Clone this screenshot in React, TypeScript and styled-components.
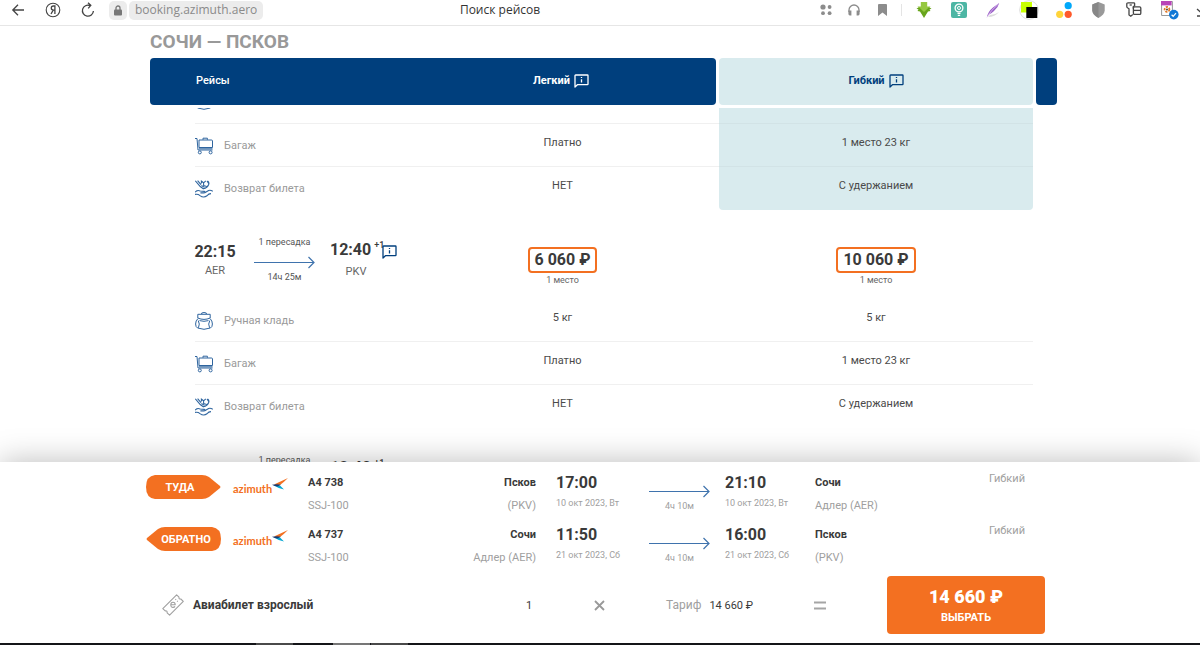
import React from "react";
import styled, { createGlobalStyle, css } from "styled-components";

const navy = "#003f7d";
const orange = "#f37021";
const teal = "#d9ebee";
const ink = "#3a3a3a";
const muted = "#a0a0a0";
const rule = "rgba(0, 0, 0, 0.06)";
const roboto = `Roboto, "Liberation Sans", sans-serif`;
const chromeFont = `"Open Sans", "Noto Sans", sans-serif`;

const GlobalStyle = createGlobalStyle`
  * { box-sizing: border-box; }
  body { margin: 0; background: #fff; color: ${ink}; font-family: ${roboto}; }
  svg { display: block; flex: none; }
  button { font-family: inherit; cursor: pointer; }
`;

const Screen = styled.div`
  display: flex;
  flex-direction: column;
  height: 100vh;
  overflow: hidden;
`;

/* Browser bar */

const BrowserBar = styled.header`
  display: grid;
  grid-template-columns: minmax(0, 46fr) auto minmax(0, 66fr);
  flex: none;
  height: 26px;
  border-bottom: 1px solid #e6e6e6;
  font-family: ${chromeFont};
  overflow: hidden;
`;

const BarGroup = styled.div<{ $end?: boolean }>`
  display: flex;
  align-items: center;
  height: 20px;
  justify-content: ${(p) => (p.$end ? "flex-end" : "flex-start")};
`;

const NavButton = styled.button`
  display: flex;
  justify-content: center;
  align-items: center;
  flex: none;
  width: 35px;
  height: 20px;
  padding: 0;
  border: 0;
  background: none;
`;

const LockChip = styled.button`
  display: flex;
  justify-content: center;
  align-items: center;
  width: 18px;
  height: 19px;
  margin: 0 2px 0 4px;
  padding: 0;
  border: 0;
  border-radius: 5px;
  background: #ececec;
`;

const Address = styled.input`
  width: 134px;
  height: 19px;
  padding: 0 6px 1px;
  border: 0;
  border-radius: 5px;
  background: #ececec;
  color: #8a8a8a;
  font: 12px/18px ${chromeFont};
`;

const PageTitle = styled.p`
  margin: 0;
  color: #333;
  font-size: 12px;
  line-height: 20px;
`;

const ToolButton = styled(NavButton)<{ $small?: boolean }>`
  width: ${(p) => (p.$small ? 28 : 35)}px;
`;

const Separator = styled.i`
  width: 1px;
  height: 12px;
  margin: 0 4px 0 5px;
  background: #e4e4e4;
`;

/* Flight results */

const Results = styled.main`
  display: flex;
  flex-direction: column;
  flex: 1;
  min-height: 0;
  padding: 4px 143px 0 150px;
  overflow: hidden;
`;

const RouteTitle = styled.h1`
  margin: 0;
  color: #999;
  font-size: 19px;
  font-weight: 700;
  line-height: 24px;
`;

const FareTable = styled.table`
  display: flex;
  flex-direction: column;
  flex: 1;
  min-height: 0;
  margin-top: 4px;
`;

const Row = styled.tr<{ $height?: number }>`
  display: grid;
  grid-template-columns: minmax(0, 256fr) minmax(0, 313fr) minmax(0, 314fr) 24px;
  grid-template-rows: minmax(0, 1fr);
  height: ${(p) => p.$height ?? 43}px;
`;

const FareHead = styled.thead`
  display: block;
  flex: none;
`;

const HeadCell = styled.th<{ $kind: "title" | "light" | "flex" | "stub" }>`
  display: flex;
  align-items: center;
  justify-content: center;
  gap: 4px;
  padding: 0 0 2px;
  background: ${navy};
  color: #fff;
  font-size: 11px;
  font-weight: 700;
  ${(p) =>
    p.$kind === "title" &&
    css`
      justify-content: flex-start;
      padding-left: 46px;
      border-radius: 4px 0 0 4px;
      font-weight: 500;
    `}
  ${(p) =>
    p.$kind === "light" &&
    css`
      margin-right: 3px;
      border-radius: 0 4px 4px 0;
    `}
  ${(p) =>
    p.$kind === "flex" &&
    css`
      border-radius: 4px;
      background: ${teal};
      color: ${navy};
    `}
  ${(p) =>
    p.$kind === "stub" &&
    css`
      margin-left: 3px;
      border-radius: 4px;
    `}
`;

const BodyRows = styled.tbody`
  display: block;
  flex: 1;
  min-height: 0;
  margin-top: 3px;
  overflow: hidden;
`;

const RowLabel = styled.th<{ $line?: boolean }>`
  display: flex;
  align-items: center;
  gap: 11px;
  margin-left: 45px;
  padding: 1px 0 0;
  border-bottom: 1px solid ${(p) => (p.$line ? rule : "transparent")};
  color: #9a9a9a;
  font-size: 11px;
  font-weight: 400;
  text-align: left;
`;

const TailLabel = styled(RowLabel)`
  align-items: flex-end;
  padding: 0 0 13px;
`;

const Value = styled.td<{ $line?: boolean; $selected?: boolean; $last?: boolean }>`
  padding: 11px 0 0;
  border-bottom: 1px solid ${(p) => (!p.$line ? "transparent" : p.$selected ? "rgba(0, 0, 0, 0.03)" : rule)};
  border-radius: ${(p) => (p.$last ? "0 0 4px 4px" : 0)};
  background: ${(p) => (p.$selected ? teal : "none")};
  color: #4a4a4a;
  font-size: 11px;
  line-height: 16px;
  text-align: center;
`;

const FlightCell = styled.th`
  display: flex;
  align-items: flex-start;
  margin-left: 44px;
  padding: 24px 0 0;
  font-weight: 400;
`;

const Stop = styled.div<{ $arrival?: boolean }>`
  flex: none;
  width: ${(p) => (p.$arrival ? 52 : 42)}px;
  padding-top: ${(p) => (p.$arrival ? 6 : 8)}px;
  text-align: center;
`;

const TimeLine = styled.div`
  display: flex;
  gap: 3px;
`;

const Time = styled.time`
  color: ${ink};
  font-size: 16px;
  font-weight: 700;
  line-height: 20px;
`;

const DayShift = styled.sup`
  font-size: 9px;
  font-weight: 500;
  line-height: 10px;
`;

const Airport = styled.div<{ $low?: boolean }>`
  padding-top: ${(p) => (p.$low ? 4 : 1)}px;
  color: #666;
  font-size: 11px;
  line-height: 16px;
`;

const Leg = styled.div<{ $muted?: boolean }>`
  display: flex;
  flex-direction: column;
  align-items: center;
  flex: none;
  width: 61px;
  color: ${(p) => (p.$muted ? muted : "#555")};
  font-size: 9px;
  line-height: 16px;
  white-space: nowrap;
`;

const FlightLeg = styled(Leg)`
  margin: 0 15px 0 18px;
  svg {
    margin: 6px 0 0;
  }
`;

const InfoSlot = styled.span`
  display: block;
  padding-top: 11px;
  color: ${navy};
`;

const PriceCell = styled.td`
  display: flex;
  flex-direction: column;
  align-items: center;
  padding: 37px 0 0;
  color: #666;
  font-size: 9px;
  line-height: 14px;
`;

const PriceButton = styled.button`
  height: 26px;
  padding: 0 5px;
  border: 2px solid ${orange};
  border-radius: 4px;
  background: #fff;
  color: ${ink};
  font-size: 16px;
  font-weight: 700;
  line-height: 22px;
`;

/* Booking summary */

const Summary = styled.section`
  position: relative;
  flex: none;
  padding: 10px 155px 9px 146px;
  background: #fff;
  box-shadow: 0 0 30px rgba(0, 0, 0, 0.27);
`;

const Segment = styled.article`
  display: grid;
  grid-template-columns: 87px 75px minmax(0, 100fr) minmax(0, 128fr) 113px 76px 90px minmax(0, 154fr) 76px;
  height: 52px;
`;

const Tag = styled.span<{ $back?: boolean }>`
  position: relative;
  display: flex;
  align-items: center;
  justify-content: center;
  width: 75px;
  height: 24px;
  margin-top: 3px;
  padding: ${(p) => (p.$back ? "0 0 0 5px" : "0 7px 0 0")};
  color: #fff;
  font-size: 11px;
  font-weight: 700;
  svg {
    position: absolute;
    inset: 0;
    transform: ${(p) => (p.$back ? "scaleX(-1)" : "none")};
  }
  span {
    position: relative;
  }
`;

const Brand = styled.span`
  display: flex;
  align-items: flex-start;
  padding-top: 5px;
  color: ${orange};
  font: 700 11px/24px Lato, sans-serif;
`;

const Pair = styled.div<{ $right?: boolean }>`
  color: ${muted};
  font-size: 11px;
  line-height: 16px;
  text-align: ${(p) => (p.$right ? "right" : "left")};
  strong {
    display: block;
    padding: 3px 0 7px;
    color: ${ink};
    font-weight: 700;
  }
`;

const Moment = styled.div<{ $indent?: boolean }>`
  padding: 1px 0 0 ${(p) => (p.$indent ? 20 : 0)}px;
  color: ${muted};
  font-size: 9px;
  line-height: 16px;
  white-space: nowrap;
  ${Time} {
    display: block;
    padding-bottom: 2px;
  }
`;

const SummaryLeg = styled(Leg)`
  padding-top: 13px;
`;

const FareClass = styled.span`
  padding-top: 1px;
  color: ${muted};
  font-size: 11px;
  line-height: 12px;
  text-align: center;
`;

const TotalRow = styled.div`
  display: grid;
  grid-template-columns: minmax(0, 373fr) minmax(0, 75fr) minmax(0, 57fr) minmax(0, 163fr) minmax(0, 73fr) 158px;
  align-items: center;
  height: 58px;
  font-size: 12px;
`;

const Passenger = styled.strong`
  display: flex;
  align-items: center;
  gap: 9px;
  padding-left: 16px;
`;

const Quantity = styled.span`
  padding-left: 7px;
  font-size: 11px;
`;

const Tariff = styled.span`
  display: flex;
  align-items: baseline;
  gap: 8px;
  padding-left: 15px;
  color: ${muted};
  b {
    color: ${ink};
    font-size: 11px;
    font-weight: 400;
  }
`;

const ChooseButton = styled.button`
  display: flex;
  flex-direction: column;
  align-items: center;
  justify-content: center;
  height: 58px;
  padding: 2px 0 0;
  border: 0;
  border-radius: 4px;
  background: ${orange};
  color: #fff;
  font-size: 11px;
  font-weight: 700;
  line-height: 18px;
  b {
    font-size: 18px;
    line-height: 24px;
  }
`;

const TaskStrip = styled.footer`
  display: flex;
  flex: none;
  gap: 1px;
  height: 2px;
  padding-left: 256px;
  background: #17181c;
`;

const Task = styled.i<{ $tone: string; $gap?: boolean }>`
  width: 37px;
  margin-right: ${(p) => (p.$gap ? 39 : 0)}px;
  background: ${(p) => p.$tone};
`;

/* Drawings */

const InfoIcon = () => (
  <svg width="15" height="14" viewBox="0 0 15 14" fill="none" stroke="currentColor" strokeWidth="1.3">
    <path d="M1 13V1.6Q1 1 1.6 1H13.4Q14 1 14 1.6V10Q14 10.7 13.4 10.7H3.4Z" strokeLinejoin="round" />
    <path d="M7.5 5.2V8.4M7.5 3V4.1" />
  </svg>
);

const ArrowIcon = () => (
  <svg width="61" height="13" viewBox="0 0 61 13" fill="none" stroke="#3f73ad" strokeWidth="1.2">
    <path d="M0 6.5H60M54.5 1L60 6.5L54.5 12" />
  </svg>
);

const BackpackIcon = () => (
  <svg width="18" height="18" viewBox="0 0 18 18" fill="none" stroke="#2f659f" strokeWidth="1">
    <path d="M6.7 2V1Q9 0 11.3 1V2M2.8 2.3H15.2V6Q12 7.4 9 7.4T2.8 6ZM3 6.5Q.6 8.5.6 12Q.6 15 2.6 16Q9 18.6 15.4 16Q17.4 15 17.4 12Q17.4 8.5 15 6.5M3.4 15.8Q5.3 12 3.2 8.5M14.6 15.8Q12.7 12 14.8 8.5M4.5 8.6Q9 10 13.5 8.6" />
  </svg>
);

const CartIcon = () => (
  <svg width="18" height="18" viewBox="0 0 18 18" fill="none" stroke="#2f659f" strokeWidth="1">
    <path d="M0 1.5H2L3 13H17.5M4 3H16.5Q17.5 3 17.5 4V10.5H4ZM8 2.8V1.2H12.4V2.8M4 11.8H17.5" />
    <circle cx="4.8" cy="15.4" r="1.5" />
    <circle cx="15.6" cy="15.4" r="1.5" />
  </svg>
);

const RefundIcon = () => (
  <svg width="18" height="18" viewBox="0 0 18 18" fill="none" stroke="#2f659f" strokeWidth="1.1">
    <path d="M.3.8L5.5 6.8M2.6.6L6 4.6M5.5 6.8L8.4 8.8Q12.4 8 13.6 4.8Q14.6 2.6 12.6 1M6.4 3.6V1.2L8.6 2.8L10.8.8M8.6 2.8V5.4L11.6 6.4M6.4 5.6L9.4 7.2M12 1L13.8 3.6" />
    <path d="M0 12.2Q2.4 9.6 5.2 11L9.4 11.4Q10.6 12.4 9 12.9H5.4M9.8 12.8L13.6 10.5Q15.4 9.6 17.8 11.3M0 14.4Q3 13.8 5 15.6Q8.6 18.4 12 15.8Q13.6 13.6 16 13.6" />
  </svg>
);

const TicketIcon = () => (
  <svg width="22" height="22" viewBox="0 0 22 22" fill="none" stroke="#a0a0a0" strokeWidth="1.1" strokeLinejoin="round">
    <path d="M14.6.8L17 3.2Q16.6 5.2 18.8 5L21.3 7.3L7.6 21.2L5.1 18.8Q5.4 16.6 3.2 16.9L.8 14.6Z" />
    <path d="M8.8 10.8H13.2Q13.2 8.2 11 8.2T8.8 10.8T11 13.4Q12.4 13.4 13 12.4" />
    <path d="M13.4 5.2L16.6 8.4" strokeDasharray="1 1.4" />
  </svg>
);

const TagShape = () => (
  <svg width="75" height="24" viewBox="0 0 75 24" fill={orange}>
    <path d="M9 0H56Q60 0 63 2L74 11Q75 12 74 13L63 22Q60 24 56 24H9Q0 23 0 12T9 0Z" />
  </svg>
);

const WingIcon = () => (
  <svg width="17" height="14" viewBox="0 0 17 14">
    <path d="M2 7.4L16 1Q12 5 8 8L5 8.4Z" fill={orange} />
    <path d="M3 9L8 8.6L12 12.4Q6.6 11.6 3 9Z" fill="#00a5d3" />
    <path d="M0 7.8Q5 6.8 9 7.8L5.6 9.6Q2.4 9.4 0 7.8Z" fill="#123c78" />
  </svg>
);

const CrossIcon = () => (
  <svg width="11" height="11" viewBox="0 0 11 11" stroke="#999" strokeWidth="1.8">
    <path d="M1 1L10 10M10 1L1 10" />
  </svg>
);

const EqualsIcon = () => (
  <svg width="12" height="9" viewBox="0 0 12 9" stroke="#a5a5a5" strokeWidth="2">
    <path d="M0 1.5H12M0 7.5H12" />
  </svg>
);

const line = { fill: "none", stroke: "#444", strokeWidth: 1.3 };

const BackIcon = () => (
  <svg width="14" height="14" viewBox="0 0 14 14" {...line}>
    <path d="M13 7H2M7 1.8L1.8 7L7 12.2" />
  </svg>
);

const YandexIcon = () => (
  <svg width="16" height="16" viewBox="0 0 16 16" {...line}>
    <circle cx="8" cy="8" r="6.8" strokeWidth="1.1" />
    <path d="M9.9 12V4H8.4Q6.3 4 6.3 6T8.4 8.2H9.9M8.2 8.2L6 12" />
  </svg>
);

const ReloadIcon = () => (
  <svg width="14" height="16" viewBox="0 0 14 16" {...line}>
    <path d="M12.4 9A5.5 5.5 0 1 1 9 3.6M7 .8L9.8 3.4L7.2 6.4" />
  </svg>
);

const LockIcon = () => (
  <svg width="8" height="11" viewBox="0 0 8 11">
    <path d="M2 5V3A2 2 0 0 1 6 3V5" fill="none" stroke="#777" strokeWidth="1.3" />
    <rect y="4.4" width="8" height="6" rx="1" fill="#777" />
  </svg>
);

const CollectionIcon = () => (
  <svg width="12" height="12" viewBox="0 0 12 12" fill="#8c8c8c">
    <circle cx="3" cy="3" r="2.6" />
    <circle cx="9.6" cy="3" r="1.9" />
    <circle cx="3" cy="9.2" r="1.9" />
    <circle cx="9.6" cy="9.2" r="1.9" />
  </svg>
);

const HeadphonesIcon = () => (
  <svg width="12" height="12" viewBox="0 0 12 12">
    <path d="M1 8V6A5 5 0 0 1 11 6V8" fill="none" stroke="#8c8c8c" strokeWidth="1.3" />
    <path d="M.4 6.6H3.4V11.4H1.8Q.4 11.4.4 9.8ZM11.6 6.6H8.6V11.4H10.2Q11.6 11.4 11.6 9.8Z" fill="#8c8c8c" />
  </svg>
);

const BookmarkIcon = () => (
  <svg width="9" height="12" viewBox="0 0 9 12" fill="#8c8c8c">
    <path d="M0 1Q0 0 1 0H8Q9 0 9 1V12L4.5 8.4L0 12Z" />
  </svg>
);

const DownloadIcon = () => (
  <svg width="16" height="16" viewBox="0 0 16 16">
    <path d="M4.8 0H11.2V4.5H14.5L8 11L1.5 4.5H4.8Z" fill="#96c840" />
    <path d="M.5 6.5L3 5.2L8 10L13 5.2L15.5 6.5L13.5 7.4L14.5 9L12 9.4L8 16L4 9.4L1.5 9L2.5 7.4Z" fill="#68a51c" />
  </svg>
);

const LocatorIcon = () => (
  <svg width="16" height="16" viewBox="0 0 16 16" fill="none">
    <rect width="16" height="16" rx="2" fill="#4db6a4" />
    <circle cx="8" cy="6" r="3.9" stroke="#fff" strokeWidth="1.3" />
    <circle cx="8" cy="6" r="1.5" stroke="#fff" />
    <path d="M6.5 11.3H9.5M6.8 13.4H9.2" stroke="#fff" strokeWidth="1.2" />
  </svg>
);

const FeatherIcon = () => (
  <svg width="15" height="16" viewBox="0 0 15 16">
    <path d="M2 15Q9 15 13 10Q9 13 4 13Z" fill="#ddd" />
    <path d="M.8 15.5Q2 9.5 7 5.5L13.2 1Q12.4 5 8 9Q5.6 11.4 3 12.4Z" fill="#9a5fc7" />
    <path d="M1 15.3Q5 8 12 2.4" stroke="#e8d5f5" strokeWidth=".7" fill="none" />
  </svg>
);

const SquaresIcon = () => (
  <svg width="20" height="20" viewBox="0 0 20 20">
    <circle cx="10" cy="10" r="9.3" fill="#fff" stroke="#ddd" />
    <rect x="2" y="2" width="11" height="10.5" fill="#c8ff00" />
    <rect x="7.3" y="7" width="11" height="11" fill="#000" />
  </svg>
);

const DotsIcon = () => (
  <svg width="16" height="16" viewBox="0 0 16 16">
    <circle cx="12.2" cy="3.7" r="3.6" fill="#00a8fa" />
    <circle cx="3.7" cy="12.3" r="3.6" fill="#ffd43a" />
    <circle cx="12.2" cy="12.3" r="3.6" fill="#ff5a2b" />
  </svg>
);

const ShieldIcon = () => (
  <svg width="13" height="16" viewBox="0 0 13 16">
    <path d="M6.5 0L12.7 2.6V8.5Q12.5 12.5 6.5 16Q.5 12.5.3 8.5V2.6Z" fill="#999" />
    <path d="M6.5 0V16Q.5 12.5.3 8.5V2.6Z" fill="#878787" />
  </svg>
);

const KeyIcon = () => (
  <svg width="16" height="16" viewBox="0 0 16 16" {...line}>
    <path d="M7.2 6.5V4.8L8.6 3.7V1.6Q8.6.8 7.8.8H2Q.8.8.8 2V4.6Q.8 5.6 1.8 6L3 6.8V13L4.8 14.2L6.8 12.6" />
    <path d="M3.6 3H5.8" />
    <rect x="7.4" y="4.8" width="7.4" height="7.6" rx="1.2" />
    <path d="M7.4 8.4H14.8" />
  </svg>
);

const FileIcon = () => (
  <svg width="20" height="20" viewBox="0 0 20 20">
    <path d="M2.6 1.5H13.4V15.5H2.6Z" fill="#fff" stroke="#999" />
    <rect x="2" y="1" width="10.6" height="4.4" fill="#b844b8" />
    <circle cx="8" cy="9.4" r="2.4" fill="none" stroke="#e27a28" strokeWidth="1.8" strokeDasharray="2 1" />
    <circle cx="8" cy="9.4" r="1" fill="#444" />
    <circle cx="14.8" cy="14.6" r="4.8" fill="#1179d6" />
    <path d="M12.6 14.8L14.2 16.3L17 13.2" fill="none" stroke="#fff" strokeWidth="1.2" />
  </svg>
);

const OverflowIcon = () => (
  <svg width="14" height="14" viewBox="0 0 14 14" {...line}>
    <path d="M11 6L15 9.5M11 13H14" />
  </svg>
);

/* Data */

const tools = [
  ["Загрузки", DownloadIcon],
  ["Геолокация", LocatorIcon],
  ["Перо", FeatherIcon],
  ["Цвета", SquaresIcon],
  ["Сервисы", DotsIcon],
  ["Защита", ShieldIcon],
  ["Пароли", KeyIcon],
  ["Файлы", FileIcon],
] as const;

const handLuggage = { name: "Ручная кладь", Icon: BackpackIcon, light: "5 кг", flex: "5 кг" };
const baggage = { name: "Багаж", Icon: CartIcon, light: "Платно", flex: "1 место 23 кг" };
const refund = { name: "Возврат билета", Icon: RefundIcon, light: "НЕТ", flex: "С удержанием" };

type Service = typeof baggage;

const segments = [
  {
    tag: "ТУДА", back: false, number: "A4 738", date: "10 окт 2023, Вт",
    from: ["Псков", "(PKV)"], to: ["Сочи", "Адлер (AER)"], depart: "17:00", arrive: "21:10",
  },
  {
    tag: "ОБРАТНО", back: true, number: "A4 737", date: "21 окт 2023, Сб",
    from: ["Сочи", "Адлер (AER)"], to: ["Псков", "(PKV)"], depart: "11:50", arrive: "16:00",
  },
];

const ServiceRows = ({ items, selected }: { items: Service[]; selected?: boolean }) => (
  <>
    {items.map(({ name, Icon, light, flex }, i) => {
      const divided = i < items.length - 1;
      return (
        <Row key={name}>
          <RowLabel scope="row" $line={divided}>
            <Icon />
            {name}
          </RowLabel>
          <Value $line={divided}>{light}</Value>
          <Value $line={divided} $selected={selected} $last={!divided}>
            {flex}
          </Value>
        </Row>
      );
    })}
  </>
);

/* The end of a row that has scrolled under the table head. */
const TailRow = () => (
  <Row $height={16}>
    <TailLabel scope="row" $line aria-label={handLuggage.name}>
      <BackpackIcon />
    </TailLabel>
    <Value $line />
    <Value $line $selected />
  </Row>
);

const FlightRow = ({ prices }: { prices: string[] }) => (
  <Row $height={89}>
    <FlightCell scope="row">
      <Stop>
        <Time>22:15</Time>
        <Airport>AER</Airport>
      </Stop>
      <FlightLeg>
        1 пересадка
        <ArrowIcon />
        14ч 25м
      </FlightLeg>
      <Stop $arrival>
        <TimeLine>
          <Time>12:40</Time>
          <DayShift>+1</DayShift>
        </TimeLine>
        <Airport $low>PKV</Airport>
      </Stop>
      <InfoSlot>
        <InfoIcon />
      </InfoSlot>
    </FlightCell>
    {prices.map((price) => (
      <PriceCell key={price}>
        <PriceButton>{price}</PriceButton>1 место
      </PriceCell>
    ))}
  </Row>
);

export default function App() {
  return (
    <Screen>
      <GlobalStyle />
      <BrowserBar>
        <BarGroup>
          <NavButton aria-label="Назад"><BackIcon /></NavButton>
          <NavButton aria-label="Яндекс"><YandexIcon /></NavButton>
          <NavButton aria-label="Обновить"><ReloadIcon /></NavButton>
          <LockChip aria-label="Соединение защищено"><LockIcon /></LockChip>
          <Address aria-label="Адрес" defaultValue="booking.azimuth.aero" />
        </BarGroup>
        <PageTitle>Поиск рейсов</PageTitle>
        <BarGroup $end>
          <ToolButton $small aria-label="Коллекции"><CollectionIcon /></ToolButton>
          <ToolButton $small aria-label="Слушать"><HeadphonesIcon /></ToolButton>
          <ToolButton $small aria-label="Закладка"><BookmarkIcon /></ToolButton>
          <Separator />
          {tools.map(([label, Icon]) => (
            <ToolButton key={label} aria-label={label}><Icon /></ToolButton>
          ))}
          <OverflowIcon />
        </BarGroup>
      </BrowserBar>

      <Results>
        <RouteTitle>СОЧИ — ПСКОВ</RouteTitle>
        <FareTable>
          <FareHead>
            <Row $height={47}>
              <HeadCell scope="col" $kind="title">Рейсы</HeadCell>
              <HeadCell scope="col" $kind="light">Легкий <InfoIcon /></HeadCell>
              <HeadCell scope="col" $kind="flex">Гибкий <InfoIcon /></HeadCell>
              <HeadCell as="td" $kind="stub" />
            </Row>
          </FareHead>
          <BodyRows>
            <TailRow />
            <ServiceRows items={[baggage, refund]} selected />
            <FlightRow prices={["6 060 ₽", "10 060 ₽"]} />
            <ServiceRows items={[handLuggage, baggage, refund]} />
            <FlightRow prices={[]} />
          </BodyRows>
        </FareTable>
      </Results>

      <Summary>
        {segments.map((s) => (
          <Segment key={s.number}>
            <Tag $back={s.back}>
              <TagShape />
              <span>{s.tag}</span>
            </Tag>
            <Brand>azimuth<WingIcon /></Brand>
            <Pair><strong>{s.number}</strong>SSJ-100</Pair>
            <Pair $right><strong>{s.from[0]}</strong>{s.from[1]}</Pair>
            <Moment $indent><Time>{s.depart}</Time>{s.date}</Moment>
            <SummaryLeg $muted><ArrowIcon />4ч 10м</SummaryLeg>
            <Moment><Time>{s.arrive}</Time>{s.date}</Moment>
            <Pair><strong>{s.to[0]}</strong>{s.to[1]}</Pair>
            <FareClass>Гибкий</FareClass>
          </Segment>
        ))}
        <TotalRow>
          <Passenger><TicketIcon />Авиабилет взрослый</Passenger>
          <Quantity>1</Quantity>
          <CrossIcon />
          <Tariff>Тариф <b>14 660 ₽</b></Tariff>
          <EqualsIcon />
          <ChooseButton><b>14 660 ₽</b>ВЫБРАТЬ</ChooseButton>
        </TotalRow>
      </Summary>
      <TaskStrip>
        <Task $tone="#555" $gap />
        <Task $tone="#888" />
        <Task $tone="#555" />
      </TaskStrip>
    </Screen>
  );
}
